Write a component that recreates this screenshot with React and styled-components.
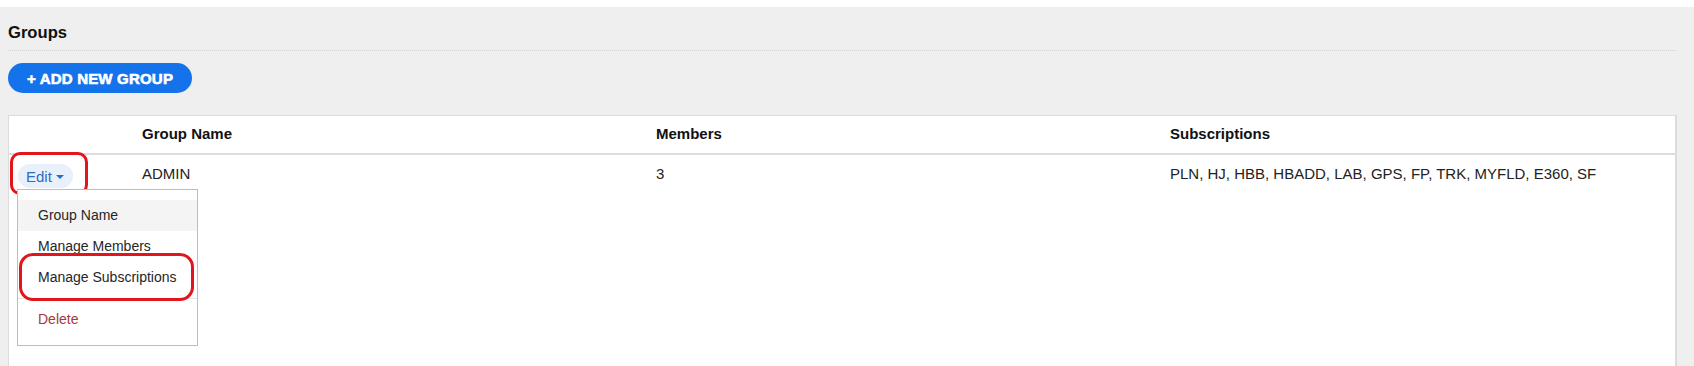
import React from 'react';
import styled, { createGlobalStyle } from 'styled-components';

const GlobalStyle = createGlobalStyle`
  html, body {
    margin: 0;
    padding: 0;
    background: #ffffff;
    font-family: "Liberation Sans", Arial, sans-serif;
    color: #222;
    overflow: hidden;
  }
`;

const Page = styled.div`
  margin-top: 7px;
  min-height: 400px;
  background: #efefef;
  padding: 0 17px 0 8px;
`;

const Title = styled.h2`
  margin: 0;
  padding: 16px 0 7px 0;
  font-size: 16.6px;
  line-height: 20px;
  font-weight: 700;
  color: #111;
  border-bottom: 1px dotted #d4d4d4;
`;

const AddButton = styled.button`
  display: flex;
  align-items: center;
  justify-content: center;
  margin-top: 12px;
  width: 184px;
  height: 30px;
  padding: 0;
  border: none;
  border-radius: 15px;
  background: #1473ea;
  color: #fff;
  font-family: "Liberation Sans", Arial, sans-serif;
  font-size: 15px;
  font-weight: 700;
  letter-spacing: 0.2px;
  text-transform: uppercase;
  -webkit-text-stroke: 0.6px #fff;
  cursor: pointer;
`;

const Card = styled.div`
  margin-top: 22px;
  height: 280px;
  background: #fff;
  border: 1px solid #dcdcdc;
  border-right: 2px solid #dcdcdc;
  border-bottom: none;
`;

const Row = styled.div`
  display: grid;
  grid-template-columns: 124px 1fr 1fr 1fr;
  border-bottom: ${p => (p.$head ? '2px solid #dddddd' : 'none')};
`;

const Cell = styled.div`
  position: relative;
  padding: ${p => (p.$head ? '8px 9px 9px' : '9px 9px 8px')};
  font-size: 15px;
  line-height: 20px;
  font-weight: ${p => (p.$head ? 700 : 400)};
  color: ${p => (p.$head ? '#111' : '#222')};
`;

const EditButton = styled.button`
  position: relative;
  display: inline-flex;
  align-items: center;
  gap: 4px;
  height: 24px;
  padding: 0 9px 0 8px;
  border: none;
  border-radius: 12px;
  background: #e8f0fb;
  color: #2f6bc4;
  font-family: "Liberation Sans", Arial, sans-serif;
  font-size: 15px;
  cursor: pointer;

  &::after {
    content: '';
    position: absolute;
    left: -8px;
    right: -15px;
    top: -12px;
    bottom: -7px;
    border: 3px solid #e2141c;
    border-radius: 10px;
    pointer-events: none;
  }
`;

const Caret = styled.span`
  width: 0;
  height: 0;
  margin-top: 2px;
  border-left: 4px solid transparent;
  border-right: 4px solid transparent;
  border-top: 4px solid #2f6bc4;
`;

const Menu = styled.ul`
  position: absolute;
  left: 8px;
  top: 34px;
  width: 179px;
  margin: 0;
  padding: 10px 0;
  list-style: none;
  background: #fff;
  border: 1px solid #bdbdbd;
  z-index: 2;
`;

const MenuItem = styled.li`
  position: relative;
  padding: 5px 20px;
  height: 21px;
  line-height: 21px;
  font-size: 14px;
  white-space: nowrap;
  color: ${p => (p.$danger ? '#a8383a' : '#262626')};
  background: ${p => (p.$active ? '#f4f4f4' : 'transparent')};

  ${p =>
    p.$marked &&
    `
    &::after {
      content: '';
      position: absolute;
      left: 1px;
      right: 3px;
      top: -9px;
      bottom: -8px;
      border: 3px solid #e2141c;
      border-radius: 14px;
      pointer-events: none;
    }
  `}
`;

const Divider = styled.li`
  height: 1px;
  margin: 5px 0;
  background: #e5e5e5;
`;

const groups = [
  {
    name: 'ADMIN',
    members: 3,
    subscriptions: ['PLN', 'HJ', 'HBB', 'HBADD', 'LAB', 'GPS', 'FP', 'TRK', 'MYFLD', 'E360', 'SF'],
  },
];

export default function App() {
  return (
    <>
      <GlobalStyle />
      <Page>
        <Title>Groups</Title>
        <AddButton>+ Add New Group</AddButton>
        <Card>
          <Row $head>
            <Cell $head />
            <Cell $head>Group Name</Cell>
            <Cell $head>Members</Cell>
            <Cell $head>Subscriptions</Cell>
          </Row>
          {groups.map(g => (
            <Row key={g.name}>
              <Cell>
                <EditButton>
                  Edit <Caret />
                </EditButton>
                <Menu>
                  <MenuItem $active>Group Name</MenuItem>
                  <MenuItem>Manage Members</MenuItem>
                  <MenuItem $marked>Manage Subscriptions</MenuItem>
                  <Divider />
                  <MenuItem $danger>Delete</MenuItem>
                </Menu>
              </Cell>
              <Cell>{g.name}</Cell>
              <Cell>{g.members}</Cell>
              <Cell>{g.subscriptions.join(', ')}</Cell>
            </Row>
          ))}
        </Card>
      </Page>
    </>
  );
}
